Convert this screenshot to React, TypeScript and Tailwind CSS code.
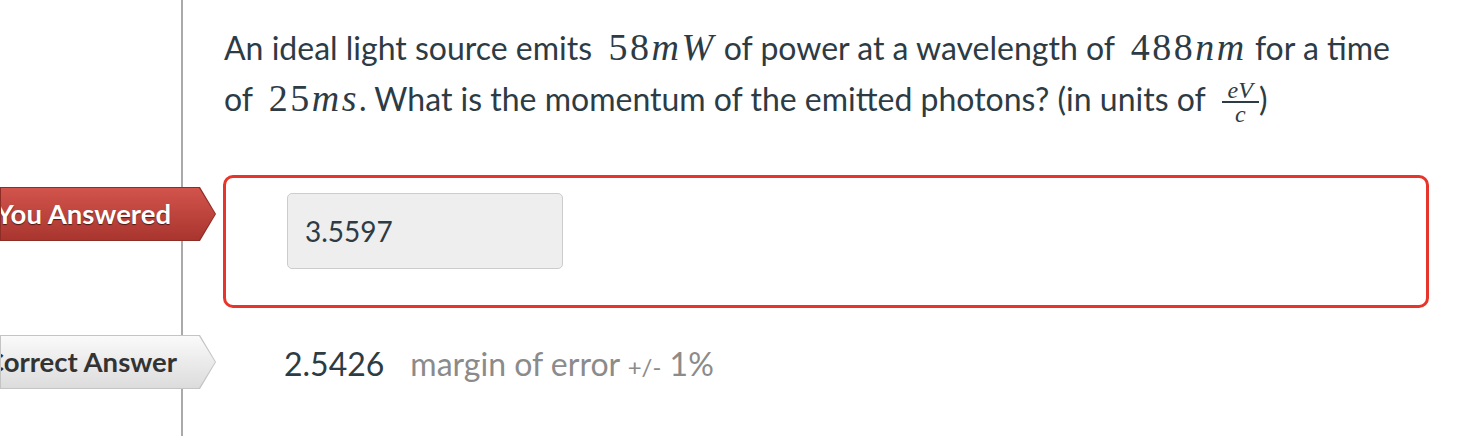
function M({ children }: { children: React.ReactNode }) {
  return (
    <span className="font-['Liberation_Serif','DejaVu_Serif',serif] text-[38px] tracking-[2.5px]">
      {children}
    </span>
  );
}

function Tag({
  label,
  tone,
}: {
  label: string;
  tone: "red" | "gray";
}) {
  const clip =
    "[clip-path:polygon(0_0,calc(100%_-_16px)_0,100%_50%,calc(100%_-_16px)_100%,0_100%)]";
  const red = tone === "red";
  return (
    <div className={`w-[216px] h-[54px] p-[1px] ${clip} ${red ? "bg-[#8e2c26]" : "bg-[#c4c4c4]"}`}>
      <div
        className={`h-full flex items-center justify-end ${clip} ${
          red
            ? "bg-gradient-to-b from-[#d2544c] to-[#a9352f] pr-[44px] text-white [text-shadow:0_1px_1px_rgba(0,0,0,0.6)]"
            : "bg-gradient-to-b from-[#fafafa] to-[#dcdcdc] pr-[38px] text-[#333333]"
        }`}
      >
        <span className="whitespace-nowrap text-[27.5px] font-bold">{label}</span>
      </div>
    </div>
  );
}

export default function App() {
  return (
    <div className="relative h-[436px] w-full overflow-hidden bg-white font-['Lato','Noto_Sans',sans-serif] text-[#2d3b45]">
      <div className="absolute left-[181px] top-0 bottom-0 w-[2px] bg-[#aaaaaa]" />

      <div className="relative h-[122px] pl-[224px] pr-[40px] pt-[22px] text-[32px] leading-[50px]">
        <p className="whitespace-nowrap">
          An ideal light source emits&nbsp; <M>58<i>mW</i></M> of power at a wavelength of&nbsp;{" "}
          <M>488<i>nm</i></M> for a time
          <br />
          of&nbsp; <M>25<i>ms</i></M>. What is the momentum of the emitted photons? (in units of&nbsp;{" "}
          <span className="inline-flex -translate-y-[1px] flex-col items-center align-middle font-['Liberation_Serif','DejaVu_Serif',serif] text-[24px] italic leading-[20px]">
            <span className="px-[6px]">eV</span>
            <span className="my-[1px] h-[1.5px] w-full bg-[#2d3b45]" />
            <span>c</span>
          </span>
          )
        </p>
      </div>

      <div className="relative mt-[53px] flex">
        <div className="w-[223px] shrink-0 pt-[12px]">
          <Tag label="You Answered" tone="red" />
        </div>
        <div className="mr-[31px] h-[133px] flex-1 rounded-[10px] border-[3px] border-[#e8352b] pl-[61px] pt-[15px]">
          <div className="flex h-[76px] w-[276px] items-center rounded-[5px] border border-[#cccccc] bg-[#eeeeee] pl-[17px] text-[28px]">
            3.5597
          </div>
        </div>
      </div>

      <div className="relative mt-[27px] flex items-center">
        <div className="w-[284px] shrink-0">
          <Tag label="Correct Answer" tone="gray" />
        </div>
        <div className="flex items-baseline pt-[4px] text-[32px]">
          <span>2.5426</span>
          <span className="ml-[26px] text-[#8b8b8b]">
            margin of error <span className="text-[24px]">+/-</span> 1%
          </span>
        </div>
      </div>
    </div>
  );
}
